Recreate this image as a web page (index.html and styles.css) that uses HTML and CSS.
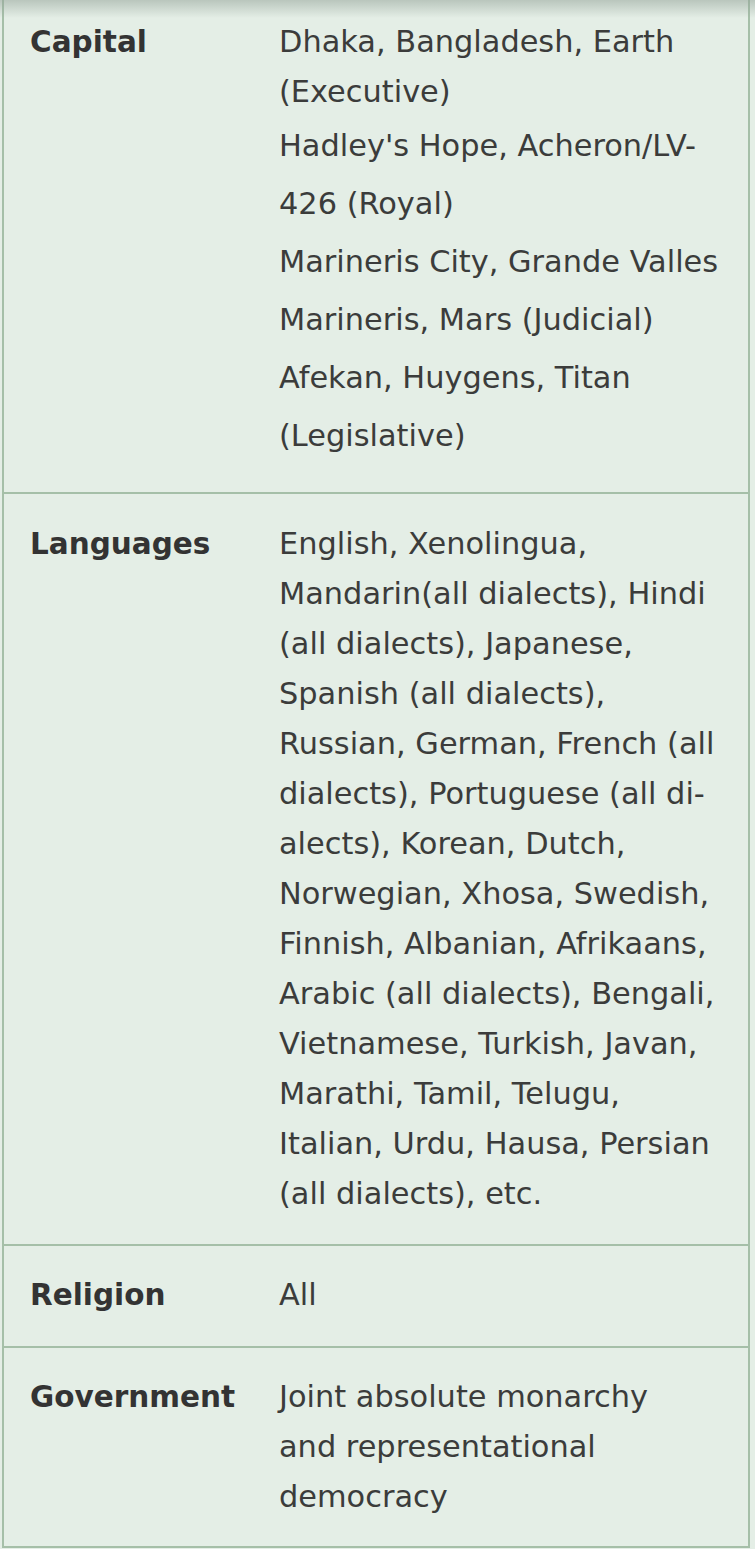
FILE: index.html
```html
<!DOCTYPE html>
<html lang="en">
<head>
<meta charset="utf-8">
<title>Infobox</title>
<link rel="stylesheet" href="styles.css">
</head>
<body>
<div class="shade"></div>
<div class="infobox">
  <div class="row row-capital">
    <div class="label">Capital</div>
    <div class="value">
      <div class="para first">Dhaka, Bangladesh, Earth<br>(Executive)</div>
      <div class="para">Hadley's Hope, Acheron/LV-<br>426 (Royal)</div>
      <div class="para">Marineris City, Grande Valles<br>Marineris, Mars (Judicial)</div>
      <div class="para">Afekan, Huygens, Titan<br>(Legislative)</div>
    </div>
  </div>
  <div class="row row-lang">
    <div class="label">Languages</div>
    <div class="value">English, Xenolingua,<br>Mandarin(all dialects), Hindi<br>(all dialects), Japanese,<br>Spanish (all dialects),<br>Russian, German, French (all<br>dialects), Portuguese (all di-<br>alects), Korean, Dutch,<br>Norwegian, Xhosa, Swedish,<br>Finnish, Albanian, Afrikaans,<br>Arabic (all dialects), Bengali,<br>Vietnamese, Turkish, Javan,<br>Marathi, Tamil, Telugu,<br>Italian, Urdu, Hausa, Persian<br>(all dialects), etc.</div>
  </div>
  <div class="row row-rel">
    <div class="label">Religion</div>
    <div class="value">All</div>
  </div>
  <div class="row row-gov">
    <div class="label">Government</div>
    <div class="value">Joint absolute monarchy<br>and representational<br>democracy</div>
  </div>
</div>
</body>
</html>
```

FILE: styles.css
```css
html, body {
  margin: 0;
  padding: 0;
  background: #e4eee6;
}
body {
  font-family: "DejaVu Sans", Inter, sans-serif;
  color: #3b3c3b;
  position: relative;
}
.shade {
  position: absolute;
  left: 0;
  top: 0;
  width: 100%;
  height: 18px;
  background: linear-gradient(to bottom, rgba(150, 165, 155, 0.55), rgba(228, 238, 230, 0));
  pointer-events: none;
}
.infobox {
  box-sizing: border-box;
  width: 748px;
  margin-left: 2px;
  border: 2px solid #a5bfa8;
  border-top: none;
  background: #e4eee6;
}
.row {
  display: grid;
  grid-template-columns: 275px 1fr;
  padding: 25px 0;
  border-bottom: 2px solid #a5bfa8;
  font-size: 30.4px;
  line-height: 50px;
}
.row:last-child {
  border-bottom: none;
}
.row-capital {
  padding: 17px 0 27px;
}
.row-rel {
  padding: 24px 0 26px;
}
.row-gov {
  padding: 24px 0 24px;
}
.label {
  padding-left: 26px;
  font-weight: 700;
  color: #333;
  font-size: 29.5px;
}
.value {
  white-space: nowrap;
}
.para {
  line-height: 58px;
}
.para.first {
  line-height: 50px;
}
```
